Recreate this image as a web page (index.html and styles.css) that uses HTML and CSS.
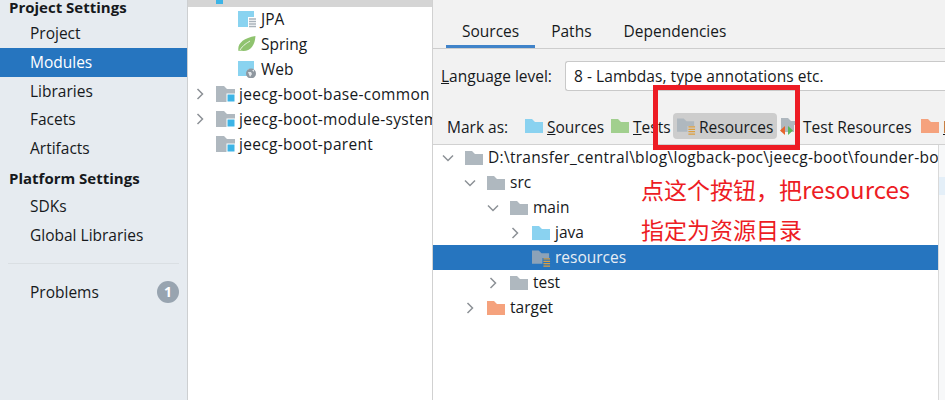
FILE: index.html
```html
<!DOCTYPE html>
<html lang="en">
<head>
<meta charset="utf-8">
<title>Project Structure</title>
<link rel="stylesheet" href="styles.css">
</head>
<body>
<svg class="defs" width="0" height="0" aria-hidden="true">
  <defs>
    <symbol id="folder" viewBox="0 0 18 16"><path d="M0 1h7l3 3h8v11H0z" fill="currentColor"/></symbol>
    <symbol id="chev-r" viewBox="0 0 10 14"><path d="M2.500 2l5 5-5 5" fill="none" stroke="#8c9196" stroke-width="1.500"/></symbol>
    <symbol id="chev-d" viewBox="0 0 14 10"><path d="M2 2.500l5 5 5-5" fill="none" stroke="#8c9196" stroke-width="1.500"/></symbol>
    <symbol id="module" viewBox="0 0 20 18"><path d="M0 1h8l3 3h8v13H0z" fill="#afb8bf"/><rect x="11" y="9" width="8" height="8" fill="#3db4e6" stroke="#fff" stroke-width="1"/></symbol>
    <symbol id="res" viewBox="0 0 20 18"><path d="M0 1h7l3 3h8v11H0z" fill="currentColor"/><path d="M11 9h8v9h-8z" fill="var(--res-bg)"/><path d="M12 10h7M12 12.500h7M12 15h7M12 17.500h7" stroke="#dd9f3f" stroke-width="1.300"/></symbol>
  </defs>
</svg>
<div class="window">
  <nav class="sidebar">
    <div class="side-head first">Project Settings</div>
    <div class="side-item">Project</div>
    <div class="side-item active">Modules</div>
    <div class="side-item">Libraries</div>
    <div class="side-item">Facets</div>
    <div class="side-item">Artifacts</div>
    <div class="side-head">Platform Settings</div>
    <div class="side-item">SDKs</div>
    <div class="side-item">Global Libraries</div>
    <div class="side-rule"></div>
    <div class="side-item problems"><span>Problems</span><span class="badge">1</span></div>
  </nav>

  <section class="modules">
    <div class="sel-strip"><span class="strip-ic"></span></div>
    <div class="mod-row facet">
      <svg class="facet-ic" viewBox="0 0 18 18"><path d="M0 1h16v6h-6v10H0z" fill="#89d3f0"/><path d="M11 9h7M11 11.500h7M11 14h7M11 16.500h7" stroke="#a9b2ba" stroke-width="1.400"/></svg>
      <span>JPA</span>
    </div>
    <div class="mod-row facet">
      <svg class="facet-ic" viewBox="0 0 18 18"><path d="M0.500 16C-1 9 5 3 17.500 1c-.5 9-5 15-12 15-2 0-3.500-.5-5 0z" fill="#8fc36f"/><path d="M2 15c3-5 7-7 10-9" fill="none" stroke="#fff" stroke-width=".8"/></svg>
      <span>Spring</span>
    </div>
    <div class="mod-row facet">
      <svg class="facet-ic" viewBox="0 0 18 18"><path d="M0 1h16v8h-6v7H0z" fill="#89d3f0"/><circle cx="13" cy="13.500" r="5" fill="#8f979f"/><path d="M10 12h3l1 2-2 3zM14 10h2v2z" fill="#e4e7ea"/></svg>
      <span>Web</span>
    </div>
    <div class="mod-row">
      <svg class="chev"><use href="#chev-r"/></svg>
      <svg class="mod-ic"><use href="#module"/></svg>
      <span class="wide">jeecg-boot-base-common</span>
    </div>
    <div class="mod-row">
      <svg class="chev"><use href="#chev-r"/></svg>
      <svg class="mod-ic"><use href="#module"/></svg>
      <span class="wide">jeecg-boot-module-system</span>
    </div>
    <div class="mod-row">
      <span class="chev"></span>
      <svg class="mod-ic"><use href="#module"/></svg>
      <span class="wide">jeecg-boot-parent</span>
    </div>
  </section>

  <main class="detail">
    <div class="tabs">
      <div class="tab active">Sources</div>
      <div class="tab">Paths</div>
      <div class="tab">Dependencies</div>
    </div>
    <div class="lang-row">
      <span class="lang-label"><u>L</u>anguage level:</span>
      <div class="select">8 - Lambdas, type annotations etc.</div>
    </div>
    <div class="mark-row">
      <span class="mark-label">Mark as:</span>
      <div class="mark mark-sources"><svg class="fold blue"><use href="#folder"/></svg><span><u>S</u>ources</span></div>
      <div class="mark mark-tests"><svg class="fold green"><use href="#folder"/></svg><span><u>T</u>ests</span></div>
      <div class="mark mark-res on"><svg class="res grey"><use href="#res"/></svg><span>Resources</span></div>
      <div class="mark mark-testres">
        <svg class="res-t" viewBox="0 0 20 18"><path d="M1 1h7l3 3h8v11H1z" fill="#afb8bf"/><path d="M14 8h6v10h-6z" fill="#f2f2f2"/><path d="M15 10h5M15 12.500h5M15 15h5M15 17.500h5" stroke="#dd9f3f" stroke-width="1.200"/><path d="M0 13.500l5-4.500v9z" fill="#e8642c"/><path d="M13 13.500l-5-4.500v9z" fill="#5bb75b"/></svg>
        <span>Test Resources</span>
      </div>
      <div class="mark mark-ex"><svg class="fold orange"><use href="#folder"/></svg><span><u>E</u>xcluded</span></div>
    </div>
    <div class="tree-wrap">
      <div class="tree">
        <div class="row d0"><svg class="chev-d"><use href="#chev-d"/></svg><svg class="fold grey"><use href="#folder"/></svg><span class="wide">D:\transfer_central\blog\logback-poc\jeecg-boot\founder-boot</span></div>
        <div class="row d1"><svg class="chev-d"><use href="#chev-d"/></svg><svg class="fold grey"><use href="#folder"/></svg><span>src</span></div>
        <div class="row d2"><svg class="chev-d"><use href="#chev-d"/></svg><svg class="fold grey"><use href="#folder"/></svg><span>main</span></div>
        <div class="row d3"><svg class="chev-r"><use href="#chev-r"/></svg><svg class="fold blue"><use href="#folder"/></svg><span>java</span></div>
        <div class="row d3 selected"><span class="chev-r"></span><svg class="res dim"><use href="#res"/></svg><span>resources</span></div>
        <div class="row d2"><svg class="chev-r"><use href="#chev-r"/></svg><svg class="fold grey"><use href="#folder"/></svg><span>test</span></div>
        <div class="row d1"><svg class="chev-r"><use href="#chev-r"/></svg><svg class="fold orange"><use href="#folder"/></svg><span>target</span></div>
      </div>
      <div class="gutter"><div class="gutter-mark"></div></div>
    </div>
  </main>
</div>

<div class="callout"></div>
<div class="note note-1">点这个按钮，把<span class="note-latin">resources</span></div>
<div class="note note-2">指定为资源目录</div>
</body>
</html>
```
FILE: styles.css
```css
* { box-sizing: border-box; }
html, body { margin: 0; height: 100%; overflow: hidden; }
body {
  position: relative;
  font-family: "Open Sans", "Noto Sans CJK SC", sans-serif;
  font-size: 15.500px;
  color: #16191c;
  background: #f2f2f2;
}
.defs { position: absolute; }
.window { display: flex; height: 400px; width: 945px; overflow: hidden; }
.wide { letter-spacing: 0.300px; }

/* left settings list */
.sidebar {
  width: 188px;
  flex: none;
  background: #e6ebf0;
  border-right: 1px solid #cdcfd1;
}
.side-head {
  height: 28.800px;
  line-height: 31.500px;
  padding-left: 9px;
  font-size: 15px;
  font-weight: 700;
}
.side-head.first { height: 19px; line-height: 15px; }
.side-item {
  height: 28.800px;
  line-height: 29.500px;
  padding-left: 30px;
}
.side-item.active { background: #2675bf; color: #fff; }
.side-rule { height: 1px; margin: 14px 8px 13px; background: #dadfe3; }
.problems { display: flex; justify-content: space-between; align-items: center; padding-right: 8px; }
.problems > span:first-child { margin-top: 1px; }
.badge {
  width: 22px;
  height: 22px;
  border-radius: 50%;
  background: #98a4b0;
  color: #fff;
  font-weight: 700;
  font-size: 14px;
  line-height: 22px;
  text-align: center;
}

/* module tree */
.modules {
  width: 245px;
  flex: none;
  background: #fff;
  border-right: 1px solid #d1d1d1;
  overflow: hidden;
}
.sel-strip { display: flex; height: 7px; padding-left: 28px; background: #d5d5d5; margin-bottom: -0.500px; }
.strip-ic { width: 7px; height: 4px; background: #3db4e6; }
.mod-row {
  display: flex;
  align-items: center;
  height: 25px;
  padding-left: 7px;
  white-space: nowrap;
}
.mod-row.facet { padding-left: 50px; }
.facet-ic { width: 18px; height: 18px; margin-right: 5px; flex: none; }
.chev { width: 10px; height: 14px; margin-right: 11px; flex: none; }
.mod-ic { width: 20px; height: 18px; margin-right: 3px; flex: none; }

/* right pane */
.detail { flex: 1; min-width: 0; display: flex; flex-direction: column; background: #f2f2f2; overflow: hidden; }
.tabs {
  display: flex;
  height: 49px;
  padding: 16px 0 0 13px;
  border-bottom: 1px solid #cdcdcd;
}
.tab { padding: 0 16px; height: 32px; line-height: 31px; }
.tab.active { box-shadow: inset 0 -3px 0 #4083c9; }
.lang-row {
  display: flex;
  align-items: center;
  height: 30px;
  margin-top: 12px;
  padding-left: 8px;
  white-space: nowrap;
}
.lang-label { width: 124px; flex: none; }
.select {
  flex: 1;
  height: 30px;
  line-height: 29px;
  padding-left: 8px;
  letter-spacing: 0.050px;
  background: #fff;
  border: 1px solid #c9c9c9;
  border-right: 0;
  border-radius: 3px 0 0 3px;
}
.mark-row {
  display: flex;
  align-items: center;
  height: 26px;
  margin-top: 22px;
  padding-left: 14px;
  white-space: nowrap;
}
.mark-label { width: 78px; flex: none; padding-top: 1px; }
.mark { display: flex; align-items: center; height: 26px; flex: none; }
.mark > span { padding-top: 1px; }
.mark-sources { width: 86px; }
.mark-tests { width: 62px; }
.mark-res { width: 104px; padding-left: 4px; border-radius: 4px; }
.mark-res.on { background: #cdcdcd; --res-bg: #cdcdcd; }
.mark-testres { width: 144px; padding-left: 3px; }
.mark .fold { margin-right: 4px; }
.mark .res { margin-right: 3px; }
.res-t { width: 20px; height: 18px; margin-right: 3px; flex: none; }
.fold { width: 18px; height: 16px; flex: none; }
.res { width: 19px; height: 18px; flex: none; }
.blue { color: #8ad2f0; }
.green { color: #a1cf8e; }
.grey { color: #afb8bf; }
.orange { color: #f5a27d; }
.dim { color: #8ba2b8; --res-bg: #2675bf; }

.tree-wrap {
  flex: 1;
  min-height: 0;
  display: flex;
  margin-top: 5px;
  background: #fff;
  border-top: 1px solid #d1d1d1;
}
.tree { flex: 1; min-width: 0; overflow: hidden; }
.row {
  display: flex;
  align-items: center;
  height: 25px;
  white-space: nowrap;
}
.row > span:last-child { margin: 0 0 2px 5px; }
.row.selected > span:last-child { margin-left: 4px; }
.d0 { padding-left: 8px; }
.d1 { padding-left: 30px; }
.d2 { padding-left: 53px; }
.d3 { padding-left: 75px; }
.chev-d { width: 14px; height: 10px; margin-right: 10px; flex: none; }
.chev-r { width: 10px; height: 14px; margin: 0 12px 0 2px; flex: none; }
.selected { background: #2675bf; color: #e8eef5; }
.gutter { width: 7px; flex: none; background: #f7f8f9; border-left: 1px solid #d9d9d9; }
.gutter-mark { height: 18px; margin-top: 32px; background: #e4eff8; }

/* annotation */
.callout {
  position: absolute;
  left: 653px;
  top: 85px;
  width: 147px;
  height: 65px;
  border: 5px solid #ed1c24;
}
.note {
  position: absolute;
  font-family: "Noto Sans CJK SC", sans-serif;
  font-size: 23px;
  color: #ed1c24;
  white-space: nowrap;
}
.note-latin { font-size: 24px; }
.note-1 { left: 641px; top: 171px; }
.note-2 { left: 641px; top: 212px; }
```
